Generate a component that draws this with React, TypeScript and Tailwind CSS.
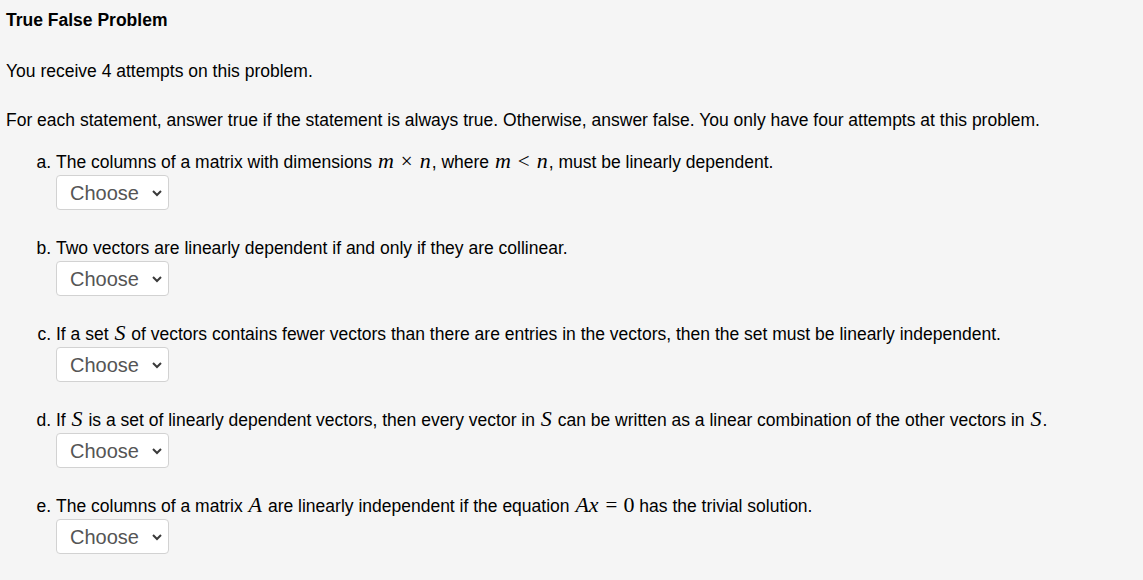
import React from 'react'

const M = ({ children }: { children: React.ReactNode }) => (
  <span className="px-[1px] font-['Liberation_Serif',serif] text-[22px] italic leading-none">{children}</span>
)
const Op = ({ children }: { children: React.ReactNode }) => (
  <span className="mx-[6px] font-['Liberation_Serif',serif] text-[21px] leading-none">{children}</span>
)

function Choose() {
  return (
    <div className="mt-[1px] flex h-[35px] w-[113px] items-center justify-between rounded-[4px] border border-[#d2d2d2] bg-white pl-[13px] pr-[5px] text-[20px] text-[#555]">
      <span>Choose</span>
      <svg width="12" height="8" viewBox="0 0 12 8">
        <polyline points="2,2 6,6 10,2" fill="none" stroke="#3a3a3a" strokeWidth="2" />
      </svg>
    </div>
  )
}

const items: React.ReactNode[] = [
  <>
    The columns of a matrix with dimensions <M>m</M>
    <Op>×</Op>
    <M>n</M>, where <M>m</M>
    <Op>&lt;</Op>
    <M>n</M>, must be linearly dependent.
  </>,
  <>Two vectors are linearly dependent if and only if they are collinear.</>,
  <>
    If a set <M>S</M> of vectors contains fewer vectors than there are entries in the vectors, then the set must be
    linearly independent.
  </>,
  <>
    If <M>S</M> is a set of linearly dependent vectors, then every vector in <M>S</M> can be written as a linear
    combination of the other vectors in <M>S</M>.
  </>,
  <>
    The columns of a matrix <M>A</M> are linearly independent if the equation <M>Ax</M>
    <Op>=</Op>
    <span className="font-['Liberation_Serif',serif] text-[22px] leading-none">0</span> has the trivial solution.
  </>,
]

export default function App() {
  return (
    <div className="min-h-[580px] bg-[#f5f5f5] px-[6px] pt-[8px] font-['Liberation_Sans',Arial,sans-serif] text-[17.5px] leading-[24px] text-black">
      <h1 className="font-bold">True False Problem</h1>
      <p className="mt-[27px]">You receive 4 attempts on this problem.</p>
      <p className="mt-[25px]">
        For each statement, answer true if the statement is always true. Otherwise, answer false. You only have four
        attempts at this problem.
      </p>
      <ol className="mt-[18px] list-[lower-alpha] pl-[50px]">
        {items.map((it, i) => (
          <li key={i} className={i > 0 ? 'mt-[26px]' : ''}>
            <div className="h-[24px]">{it}</div>
            <Choose />
          </li>
        ))}
      </ol>
    </div>
  )
}
